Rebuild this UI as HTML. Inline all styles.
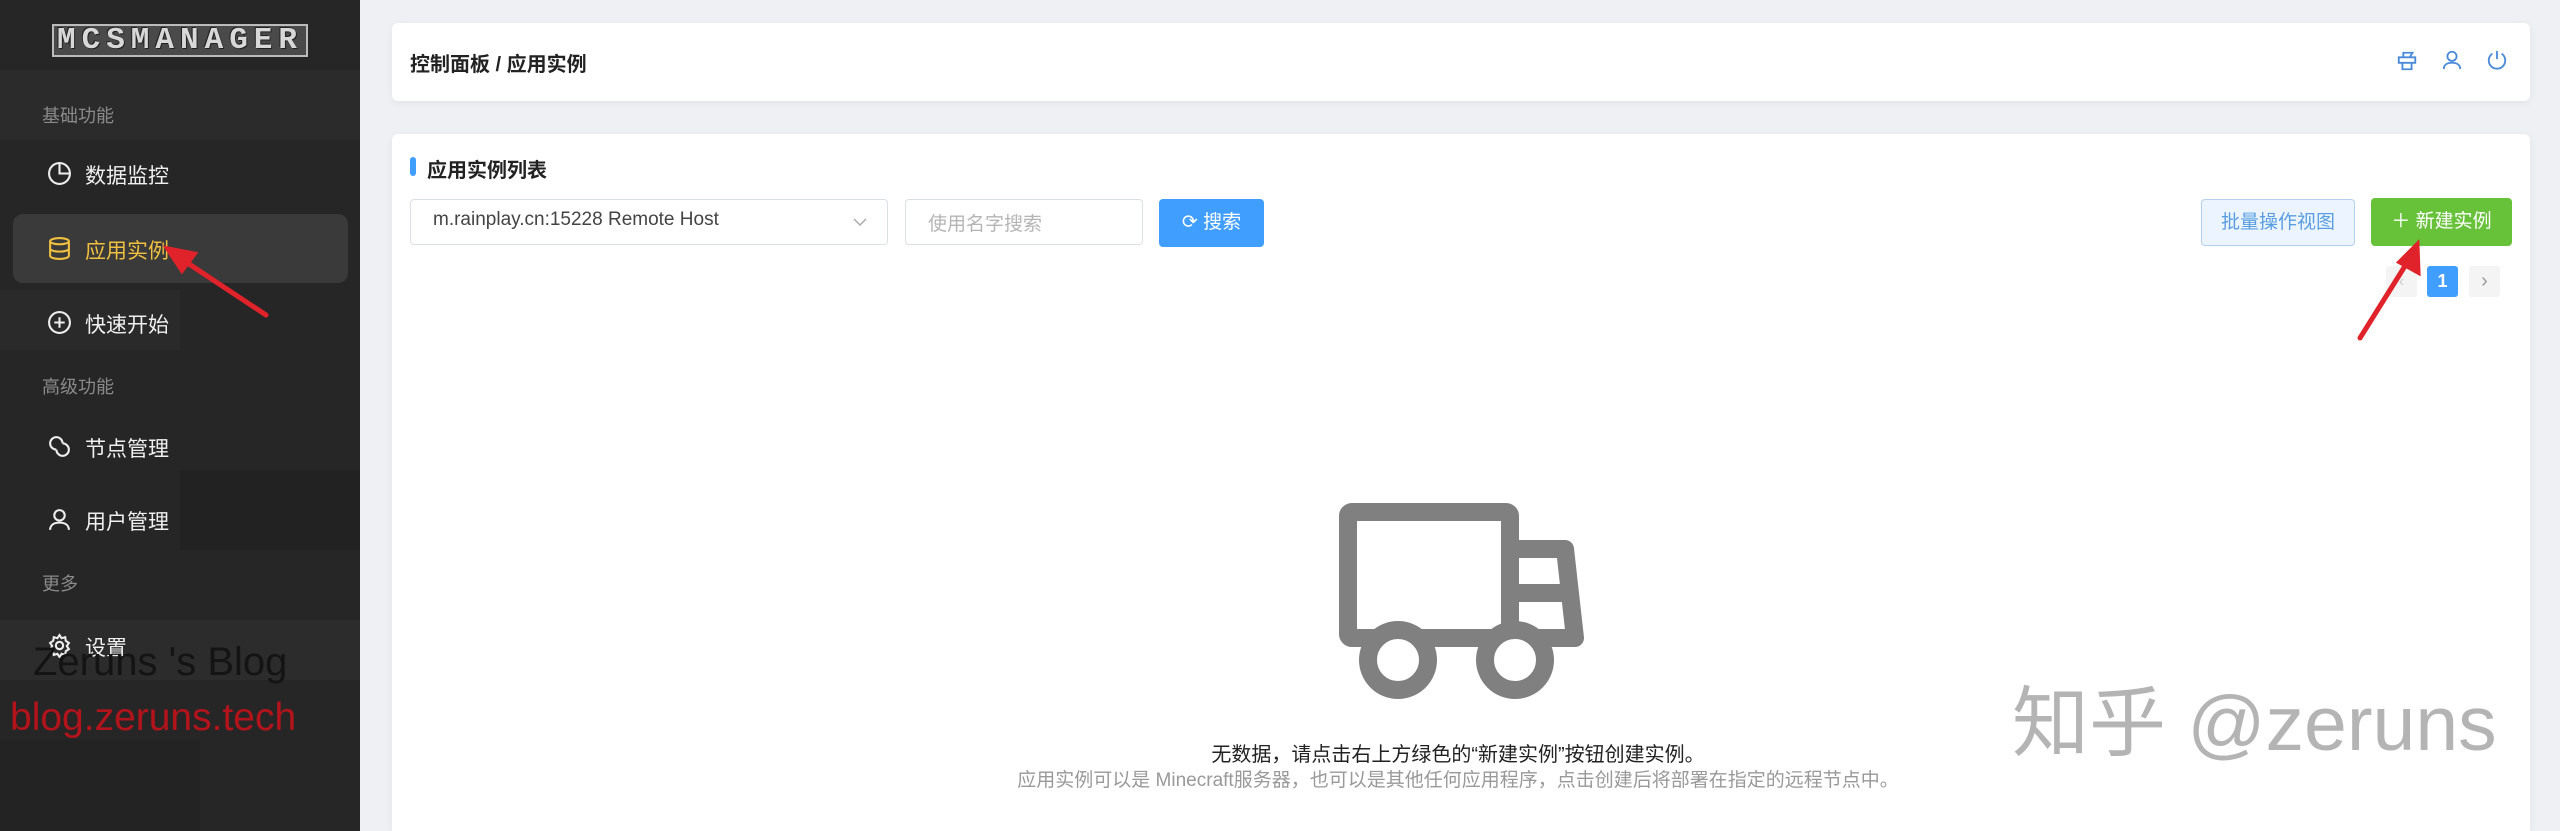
<!DOCTYPE html>
<html><head><meta charset="utf-8"><style>
*{margin:0;padding:0;box-sizing:border-box}
html,body{width:2560px;height:831px;overflow:hidden}
body{background:#eef0f4;font-family:"Liberation Sans","Noto Sans CJK SC",sans-serif;position:relative}
.side{position:absolute;left:0;top:0;width:360px;height:831px;background:#262626;overflow:hidden}
.blk{position:absolute}
.abs{position:absolute;white-space:nowrap}
.sec{color:#8a8a8a;font-size:18px;left:42px}
.mi{color:#f0f0f0;font-size:21px;left:85px}
.ic{position:absolute;left:47px}
.card{position:absolute;background:#fff;border-radius:6px;box-shadow:0 2px 8px rgba(0,0,0,.06)}
</style></head><body>
<div class="side">
<div class="blk" style="left:0;top:70px;width:360px;height:70px;background:#2b2b2b"></div>
<div class="blk" style="left:0;top:290px;width:180px;height:60px;background:#2a2a2a"></div>
<div class="blk" style="left:180px;top:470px;width:180px;height:80px;background:#222"></div>
<div class="blk" style="left:0;top:620px;width:360px;height:60px;background:#2c2c2c"></div>
<div class="blk" style="left:0;top:740px;width:200px;height:91px;background:#232323"></div>
<div class="abs" style="left:52px;top:24px;width:256px;height:33px;background:#4a4a4a;border:2px solid #bbb;"></div>
<div class="abs" style="left:54px;top:22px;width:252px;font:bold 31px 'Liberation Mono',monospace;color:#d8d8d8;letter-spacing:6px;text-shadow:1px 1px 0 #222,-1px -1px 0 #222;line-height:38px;text-align:center">MCSMANAGER</div>
<div class="abs sec" style="top:102px">基础功能</div>
<svg class="ic" style="top:161px" width="25" height="25" viewBox="0 0 24 24" fill="none" stroke="#eee" stroke-width="2"><circle cx="12" cy="12" r="10"/><path d="M12 2v10h10"/></svg>
<div class="abs mi" style="top:160px">数据监控</div>
<div class="abs" style="left:13px;top:214px;width:335px;height:69px;border-radius:10px;background:#3a3a3a"></div>
<svg class="ic" style="top:236px" width="25" height="25" viewBox="0 0 24 24" fill="none" stroke="#f0c040" stroke-width="2"><ellipse cx="12" cy="5" rx="9" ry="3"/><path d="M3 5v14c0 1.7 4 3 9 3s9-1.3 9-3V5M3 12c0 1.7 4 3 9 3s9-1.3 9-3"/></svg>
<div class="abs mi" style="top:235px;color:#f0c040">应用实例</div>
<svg class="ic" style="top:310px" width="25" height="25" viewBox="0 0 24 24" fill="none" stroke="#eee" stroke-width="2"><circle cx="12" cy="12" r="10"/><path d="M12 7v10M7 12h10"/></svg>
<div class="abs mi" style="top:309px">快速开始</div>
<div class="abs sec" style="top:373px">高级功能</div>
<svg class="ic" style="top:434px" width="25" height="25" viewBox="0 0 24 24" fill="none" stroke="#eee" stroke-width="2"><path d="M9 15a6 6 0 1 1 6-6M15 9a6 6 0 1 1-6 6"/></svg>
<div class="abs mi" style="top:433px">节点管理</div>
<svg class="ic" style="top:507px" width="25" height="25" viewBox="0 0 24 24" fill="none" stroke="#eee" stroke-width="2"><circle cx="12" cy="8" r="5"/><path d="M3 22c0-5 4-7 9-7s9 2 9 7"/></svg>
<div class="abs mi" style="top:506px">用户管理</div>
<div class="abs sec" style="top:570px">更多</div>
<svg class="ic" style="top:633px" width="25" height="25" viewBox="0 0 24 24" fill="none" stroke="#eee" stroke-width="2"><circle cx="12" cy="12" r="3.5"/><path d="M12 2l2 3 3.5-1 .5 3.5 3 2-2 3 2 3-3 2-.5 3.5-3.5-1-2 3-2-3-3.5 1-.5-3.5-3-2 2-3-2-3 3-2 .5-3.5 3.5 1z"/></svg>
<div class="abs mi" style="top:632px">设置</div>
<div class="abs" style="left:33px;top:640px;font-size:40px;color:#141414">Zeruns 's Blog</div>
<div class="abs" style="left:10px;top:696px;font-size:39px;color:#b3141c">blog.zeruns.tech</div>
</div>

<div class="card" style="left:392px;top:23px;width:2138px;height:78px"></div>
<div class="abs" style="left:410px;top:48px;font-size:20px;font-weight:bold;color:#222">控制面板 / 应用实例</div>
<svg class="abs" style="left:2396px;top:50px" width="22" height="22" viewBox="0 0 24 24" fill="none" stroke="#4a8ad8" stroke-width="2"><path d="M3 8h18v6H3zM7 14v7h10v-7M8 8V3h10l-3 5"/></svg>
<svg class="abs" style="left:2441px;top:49px" width="22" height="22" viewBox="0 0 24 24" fill="none" stroke="#4a8ad8" stroke-width="2"><circle cx="12" cy="8" r="5"/><path d="M3 22c0-5 4-7 9-7s9 2 9 7"/></svg>
<svg class="abs" style="left:2486px;top:49px" width="22" height="22" viewBox="0 0 24 24" fill="none" stroke="#4a8ad8" stroke-width="2"><path d="M12 2v9M7 5a9 9 0 1 0 10 0"/></svg>

<div class="card" style="left:392px;top:134px;width:2138px;height:697px;border-radius:6px 6px 0 0"></div>
<div class="abs" style="left:410px;top:157px;width:6px;height:19px;border-radius:3px;background:#409eff"></div>
<div class="abs" style="left:427px;top:154px;font-size:20px;font-weight:bold;color:#222">应用实例列表</div>
<div class="abs" style="left:410px;top:199px;width:478px;height:46px;border:1px solid #dcdfe6;border-radius:4px"></div>
<div class="abs" style="left:433px;top:209px;font-size:19px;color:#444">m.rainplay.cn:15228 Remote Host</div>
<svg class="abs" style="left:852px;top:215px" width="16" height="14" viewBox="0 0 16 14" fill="none" stroke="#aaa" stroke-width="1.5"><path d="M2 4l6 6 6-6"/></svg>
<div class="abs" style="left:905px;top:199px;width:238px;height:46px;border:1px solid #dcdfe6;border-radius:4px"></div>
<div class="abs" style="left:928px;top:209px;font-size:19px;color:#b5b5b5">使用名字搜索</div>
<div class="abs" style="left:1159px;top:199px;width:105px;height:48px;background:#409eff;border-radius:4px;color:#fff;font-size:19px;line-height:48px;text-align:center">⟳ 搜索</div>
<div class="abs" style="left:2201px;top:199px;width:154px;height:47px;background:#ecf5ff;border:1px solid #b3d0ee;border-radius:4px;color:#5a9ee0;font-size:19px;line-height:45px;text-align:center">批量操作视图</div>
<div class="abs" style="left:2371px;top:198px;width:141px;height:48px;background:#67c23a;border-radius:4px;color:#fff;font-size:19px;line-height:48px;text-align:center">＋ 新建实例</div>
<div class="abs" style="left:2386px;top:266px;width:31px;height:31px;background:#f4f4f5;border-radius:3px;color:#ccc;text-align:center;line-height:31px">‹</div>
<div class="abs" style="left:2427px;top:266px;width:31px;height:31px;background:#409eff;border-radius:3px;color:#fff;font-weight:bold;font-size:18px;text-align:center;line-height:31px">1</div>
<div class="abs" style="left:2469px;top:266px;width:31px;height:31px;background:#f4f4f5;border-radius:3px;color:#999;text-align:center;line-height:31px;font-size:20px">›</div>

<svg class="abs" style="left:0;top:0" width="2560" height="831">
<g fill="none" stroke="#808080" stroke-width="18" stroke-linejoin="round">
<rect x="1348" y="512" width="162" height="126" rx="4"/>
<path d="M1510 549h55l10 89H1510M1512 593h58"/>
<circle cx="1398" cy="660" r="30" fill="#fff"/>
<circle cx="1515" cy="660" r="30" fill="#fff"/>
</g>
<g stroke="#e0232a" stroke-width="5" fill="#e0232a" stroke-linecap="round">
<line x1="266" y1="315" x2="180" y2="258"/>
<polygon points="168,249 194,254 182,270" />
<line x1="2360" y1="338" x2="2410" y2="258"/>
<polygon points="2417,245 2418,272 2400,262"/>
</g>
</svg>

<div class="abs" style="left:0;width:2916px;top:738px;text-align:center;font-size:20px;color:#222">无数据，请点击右上方绿色的“新建实例”按钮创建实例。</div>
<div class="abs" style="left:0;width:2916px;top:765px;text-align:center;font-size:19px;color:#999">应用实例可以是 Minecraft服务器，也可以是其他任何应用程序，点击创建后将部署在指定的远程节点中。</div>
<div class="abs" style="left:2012px;top:678px;font-size:77px;color:#b4b4b4;line-height:92px">知乎 @zeruns</div>
</body></html>
